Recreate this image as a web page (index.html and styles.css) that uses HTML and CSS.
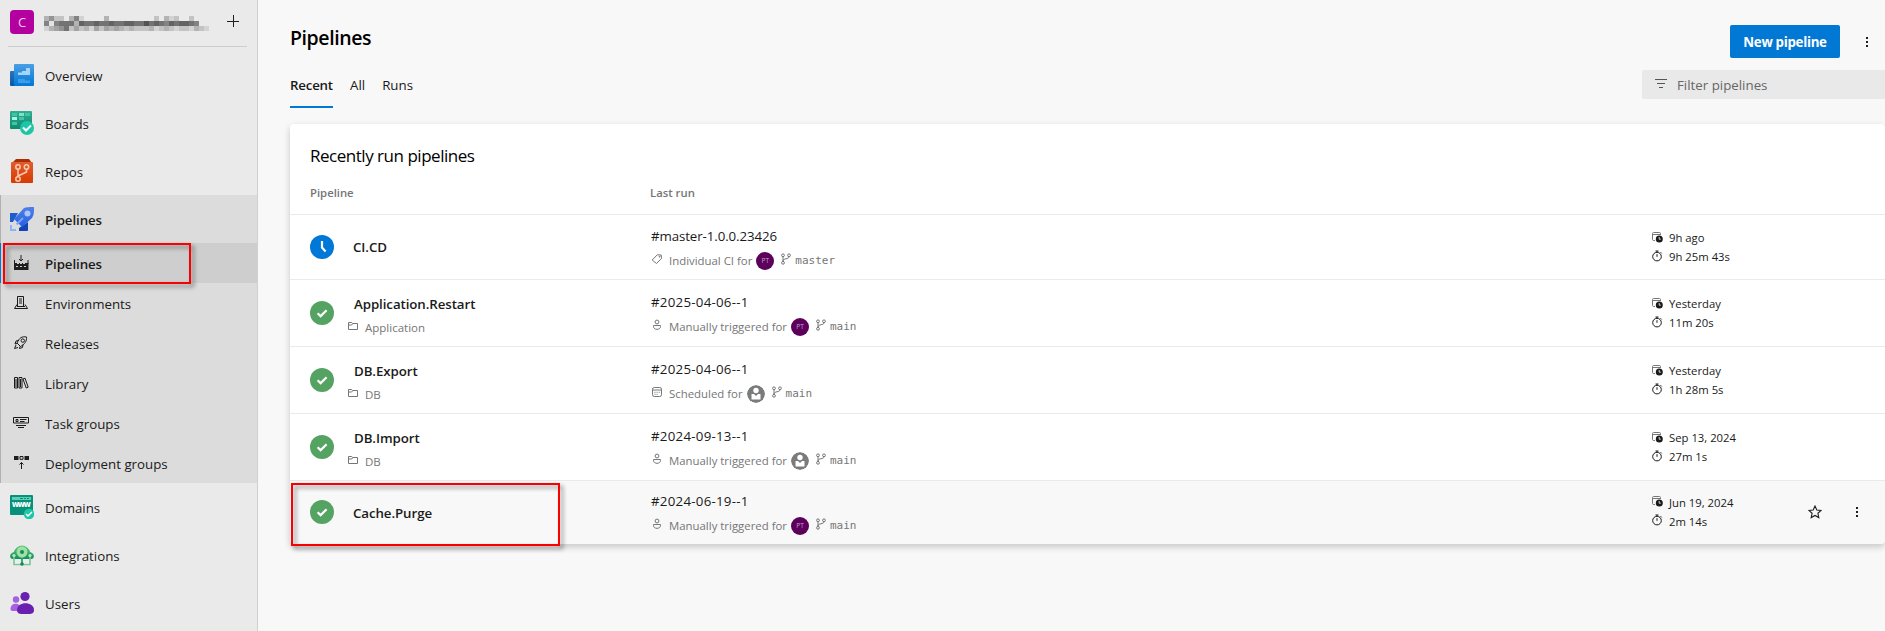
FILE: index.html
```html
<!DOCTYPE html>
<html lang="en">

<head>
    <meta charset="UTF-8">
    <meta name="viewport" content="width=device-width, initial-scale=1.0">
    <title>Pipelines</title>
    <link rel="stylesheet" href="styles.css">
</head>

<body>
    <!-- shared icons -->
    <svg class="defs" width="0" height="0">
        <defs>
            <linearGradient id="gBlue" x1="0" y1="0" x2="0" y2="1"><stop offset="0" stop-color="#4a9fe5"/><stop offset="1" stop-color="#0078d7"/></linearGradient>
            <linearGradient id="gNavy" x1="0" y1="0" x2="0" y2="1"><stop offset="0" stop-color="#2b74ba"/><stop offset="1" stop-color="#045aa5"/></linearGradient>
            <linearGradient id="gGreen" x1="0" y1="0" x2="0" y2="1"><stop offset="0" stop-color="#35ab91"/><stop offset="1" stop-color="#0f8a71"/></linearGradient>
            <linearGradient id="gOrange" x1="0" y1="0" x2="0" y2="1"><stop offset="0" stop-color="#df5d2f"/><stop offset="1" stop-color="#d83b01"/></linearGradient>
            <linearGradient id="gRocket" x1="0" y1="0" x2="0" y2="1"><stop offset="0" stop-color="#4f80e8"/><stop offset="1" stop-color="#2560e0"/></linearGradient>
            <linearGradient id="gCloud" x1="0" y1="0" x2="0" y2="1"><stop offset="0" stop-color="#5fca7b"/><stop offset="1" stop-color="#118f5e"/></linearGradient>
        </defs>
        <symbol id="ok" viewBox="0 0 24 24">
            <circle cx="12" cy="12" r="12" fill="#55a362"/>
            <path d="M7.6 12.2l3 2.9 6-5.8" fill="none" stroke="#fff" stroke-width="2.2"/>
        </symbol>
        <symbol id="queued" viewBox="0 0 24 24">
            <circle cx="12" cy="12" r="12" fill="#0078d7"/>
            <path d="M12 6v6.6l3.6 3.8" fill="none" stroke="#fff" stroke-width="2.2"/>
        </symbol>
        <symbol id="folder" viewBox="0 0 12 12">
            <path d="M1.5 9.5v-7h3.2l1 1h4.8v6zM1.5 5h3.2l1-1.4"/>
        </symbol>
        <symbol id="tag" viewBox="0 0 12 12">
            <path d="M1.2 7L6.3 1.8l3.9.2.3 3.4-5 5.1z"/><circle cx="8.6" cy="3.7" r=".5"/>
        </symbol>
        <symbol id="manual" viewBox="0 0 12 12">
            <circle cx="6" cy="3" r="1.9"/><path d="M2.5 6.5h7v1.2c0 3.5-7 3.5-7 0z"/>
        </symbol>
        <symbol id="schedule" viewBox="0 0 12 12">
            <rect x="1.5" y="1.5" width="9" height="9" rx="1.8"/><path d="M1.5 4h9M3.5 6.3h1M5.6 6.3h1M7.7 6.3h1M3.5 8.3h1M5.6 8.3h1"/>
        </symbol>
        <symbol id="branch" viewBox="0 0 12 12">
            <circle cx="3" cy="2.3" r="1.4"/><circle cx="9" cy="2.3" r="1.4"/><circle cx="3" cy="9.8" r="1.4"/>
            <path d="M3 3.7v4.7M9 3.7c0 2.8-6 1.2-6 4.4"/>
        </symbol>
        <symbol id="person" viewBox="0 0 18 18">
            <circle cx="9" cy="9" r="9" fill="#7b7b7b"/>
            <path d="M4.500 9H7l2 2 2-2h2.500v5.500h-9z" fill="#fff"/>
            <circle cx="9" cy="5.500" r="2.700" fill="#fff"/>
        </symbol>
        <symbol id="date" viewBox="0 0 12 12">
            <path d="M4 9.5H2.6c-.8 0-1.1-.5-1.1-1.1V2.6c0-.7.4-1.1 1.1-1.1h5.8c.7 0 1.1.4 1.1 1.1V4M1.5 3.5h8" stroke="#777"/>
            <circle cx="8.3" cy="8" r="3.5" fill="#1a1a1a" stroke="none"/><path d="M8.2 6v2.2h1.6" stroke="#fff" stroke-width=".8"/>
        </symbol>
        <symbol id="timer" viewBox="0 0 12 12">
            <circle cx="6" cy="6.6" r="4.3"/><path d="M4.5 1h3M6 1v1.3M6 4.2v2.6M9.5 2.2l1.2 1.2"/>
        </symbol>
    </svg>

    <nav class="sidebar">
        <div class="project">
            <span class="logo">C</span>
            <svg class="name" id="name" width="165" height="15" shape-rendering="crispEdges"></svg>
            <svg class="plus" width="12" height="12"><path d="M0 6.5h12M6.5 0v12" stroke="#1f1f1f" fill="none"/></svg>
        </div>

        <a class="item"><svg width="24" height="24" viewBox="0 0 24 24">
            <path d="M4 8H1a1 1 0 0 0-1 1v13a1 1 0 0 0 1 1h4z" fill="url(#gNavy)"/>
            <rect x="4" y="1" width="20" height="22" rx="1" fill="url(#gBlue)"/>
            <path d="M8 12V9.500h4V8h4V5h4v7z" fill="#a5d4fb"/><path d="M8 16h7v1.500h5V20H8z" fill="#3f9be8"/>
        </svg>Overview</a>
        <a class="item"><svg width="24" height="24" viewBox="0 0 24 24">
            <rect width="22" height="18" rx="1" fill="url(#gGreen)"/>
            <path d="M2 2h5v3H2zM15 2h5v3h-5zM9 6h5v3H9zM2 11h5v3H2z" fill="#3cc7a5"/>
            <path d="M9 2h5v3H9z" fill="#7be3c8"/><path d="M2 6h5v3H2z" fill="#a8f7e2"/>
            <circle cx="17" cy="17" r="7" fill="#1cc7a7"/><path d="M13 16.500l3 3 5-5" fill="none" stroke="#fff" stroke-width="2"/>
        </svg>Boards</a>
        <a class="item"><svg width="24" height="24" viewBox="0 0 24 24">
            <path d="M6 0h13l3 4H2z" fill="#ab2f02"/><rect x="1" y="3" width="22" height="21" rx="1" fill="url(#gOrange)"/>
            <g fill="none" stroke="#ffc9ae" stroke-width="1.500"><circle cx="8" cy="8" r="2.200"/><circle cx="16.500" cy="8" r="2.200"/><circle cx="8" cy="20" r="2.200"/><path d="M8 10v8M16.500 10v3L8 17"/></g>
        </svg>Repos</a>

        <div class="group">
            <a class="item bold"><svg width="24" height="24" viewBox="0 0 24 24">
                <path d="M0 7V6h8L3 15H0z" fill="#1c5ccb"/><path d="M9 21l9-6v8a1 1 0 0 1-1 1H9z" fill="#1345b8"/>
                <path d="M14 1c2-1 5-1 9-1 1 0 1 0 1 1 0 4 0 7-2 10L12 20l-8-8z" fill="url(#gRocket)"/>
                <circle cx="17.500" cy="6.500" r="3" fill="#a8c5f8"/>
                <path d="M13 11l-6.500 6.500" stroke="#7ba3f2" stroke-width="2"/>
                <path d="M0 18h2v4h4v2H0z" fill="#8fb1f6"/><path d="M2 18l3-2 3 3-2 3H2z" fill="#dcdcdc"/>
            </svg>Pipelines</a>
            <a class="item sub bold current"><svg width="16" height="16" viewBox="0 0 16 16">
                <path d="M8 0v6M6 4l2 2 2-2M1.500 5v4M15 5v4" fill="none" stroke="#1f1f1f"/>
                <path d="M1 8h3v1h2V8h1v1h2V8h1v1h2V8h3.500v7H1z" fill="#1f1f1f"/><path d="M3 11.500h2M7 11.500h2M11 11.500h2" stroke="#cecece"/>
            </svg>Pipelines</a>
            <a class="item sub"><svg class="line" width="16" height="16" viewBox="0 0 16 16">
                <path d="M4.500 12V1.500h6V12M6 4h3M6 6h3M6 8h3M4 9.500l-2.500 4h13l-2.500-4M4 11.500h8"/>
            </svg>Environments</a>
            <a class="item sub"><svg class="line" width="16" height="16" viewBox="0 0 16 16">
                <path d="M4 8c2-5 5-7 9.500-6 .500 4-2 7.500-6 9.500zM6 5.500l-3 .500-1 3 2-.500M10 9.500l-.500 3-3 1 .500-2M3 10l-1.500 3.500L5 12.500"/><circle cx="9.800" cy="5.600" r="1.700"/>
            </svg>Releases</a>
            <a class="item sub"><svg class="line" width="16" height="16" viewBox="0 0 16 16">
                <path d="M1.500 2.500h3v10.500h-3zM6 2.500h3v10.500H6zM3 4v8M7.500 4v8M10 4l2-.800 3.200 9-2 .800z"/>
            </svg>Library</a>
            <a class="item sub"><svg class="line" width="16" height="16" viewBox="0 0 16 16">
                <path d="M.5 2.500h15v5.500H.5zM3 4.500h2v2H3zM7 4.500h6.500M7 6.500h4.500M3 10.500h10M5 12.500h6"/>
            </svg>Task groups</a>
            <a class="item sub"><svg class="line" width="16" height="16" viewBox="0 0 16 16">
                <path d="M1 1h4.500v4H1zM11.500 1H16v4h-4.500z" fill="#1f1f1f" stroke="none"/><path d="M7 1.500h3v2.800H7zM8.500 14V7.500M6.500 9.500l2-2 2 2"/>
            </svg>Deployment groups</a>
        </div>

        <a class="item"><svg width="24" height="24" viewBox="0 0 24 24">
            <rect width="23" height="20" rx="1" fill="#06917a"/><rect x="2" y="2" width="19" height="3" fill="#5fcdb5"/><path d="M10 3.500h3M14 3.500h2M17 3.500h2" stroke="#06917a"/>
            <text class="www" x="1.800" y="12.300" textLength="19">www</text>
            <circle cx="19" cy="19" r="5.300" fill="#1cc7a7"/><path d="M16 19l2 2 4-4" fill="none" stroke="#fff" stroke-width="1.500"/>
        </svg>Domains</a>
        <a class="item"><svg width="24" height="24" viewBox="0 0 24 24">
            <path d="M4 9a8.200 8.200 0 0 1 16 0c5 1 5 7 1 7H3C-1 16-1 10 4 9z" fill="url(#gCloud)"/>
            <circle cx="12" cy="9" r="5.500" fill="#9fe0a4"/><circle cx="12" cy="9" r="2" fill="#158a5c"/>
            <path d="M4 14v7.500h16V14M12 14v7" fill="none" stroke="#7fc49c" stroke-width="1.600"/><path d="M5 16.500h14v4H5z" fill="#e6f1ea"/><path d="M12 15v6" stroke="#158a5c" stroke-width="1.500"/>
            <circle cx="4" cy="12.500" r="1.600" fill="#b7ebbc"/><circle cx="20" cy="12.500" r="1.600" fill="#b7ebbc"/><circle cx="12" cy="21" r="1.800" fill="#0f8a5f"/>
        </svg>Integrations</a>
        <a class="item"><svg width="24" height="24" viewBox="0 0 24 24">
            <circle cx="6" cy="8.500" r="3.200" fill="#a561df"/><path d="M.5 18c0-7 10-7 11 0v2h-8c-2 0-3-.500-3-2z" fill="#a561df"/>
            <circle cx="15" cy="5.500" r="4.600" fill="#6b1fb1"/><path d="M7 19c0-9 17-9 17 0 0 3-2 4-5 4h-7c-3 0-5-1-5-4z" fill="#6b1fb1"/>
        </svg>Users</a>
        <div class="mark mark-nav"></div>
    </nav>

    <main>
        <header>
            <h1>Pipelines</h1>
            <button>New pipeline</button>
            <svg class="dots" width="4" height="12"><path d="M1 1h2v2H1zM1 5h2v2H1zM1 9h2v2H1z"/></svg>
        </header>
        <div class="toolbar">
            <div class="tabs">
                <a class="tab active">Recent</a>
                <a class="tab">All</a>
                <a class="tab">Runs</a>
            </div>
            <div class="filter">
                <svg width="12" height="10"><path d="M0 .5h12M2 4.500h8M4 8.500h4" stroke="#555" fill="none"/></svg>
                Filter pipelines
            </div>
        </div>
        <section class="card">
            <h2>Recently run pipelines</h2>
            <div class="columns">
                <span>Pipeline</span>
                <span>Last run</span>
            </div>
            <div id="rows"></div>
            <div class="mark mark-row"></div>
        </section>
    </main>

    <script>
        const pipelines = [
            { name: "CI.CD", status: "queued", run: "#master-1.0.0.23426", icon: "tag", reason: "Individual CI for", by: "PT", branch: "master", date: "9h ago", time: "9h 25m 43s" },
            { name: "Application.Restart", folder: "Application", status: "ok", run: "#2025-04-06--1", icon: "manual", reason: "Manually triggered for", by: "PT", branch: "main", date: "Yesterday", time: "11m 20s" },
            { name: "DB.Export", folder: "DB", status: "ok", run: "#2025-04-06--1", icon: "schedule", reason: "Scheduled for", branch: "main", date: "Yesterday", time: "1h 28m 5s" },
            { name: "DB.Import", folder: "DB", status: "ok", run: "#2024-09-13--1", icon: "manual", reason: "Manually triggered for", branch: "main", date: "Sep 13, 2024", time: "27m 1s" },
            { name: "Cache.Purge", status: "ok", run: "#2024-06-19--1", icon: "manual", reason: "Manually triggered for", by: "PT", branch: "main", date: "Jun 19, 2024", time: "2m 14s", hover: true }
        ];

        function icon(id, size, cls) {
            return `<svg class="${cls || "line"}" width="${size}" height="${size}"><use href="#${id}"/></svg>`;
        }

        document.getElementById("rows").innerHTML = pipelines.map(p => `
            <div class="row ${p.folder ? "tall" : ""} ${p.hover ? "hover" : ""}">
                ${icon(p.status, 24, "status")}
                <div class="title">
                    <div class="pname">${p.name}</div>
                    ${p.folder ? `<div class="folder">${icon("folder", 12)}<span>${p.folder}</span></div>` : ""}
                </div>
                <div class="run">
                    <div class="number ${p.run.startsWith("#20") ? "dated" : ""}">${p.run}</div>
                    <div class="reason">
                        ${icon(p.icon, 12)}<span>${p.reason}</span>
                        ${p.by ? `<b class="avatar">${p.by}</b>` : icon("person", 18, "avatar")}
                        ${icon("branch", 12)}<code>${p.branch}</code>
                    </div>
                </div>
                <div class="when">
                    <div>${icon("date", 12)}${p.date}</div>
                    <div>${icon("timer", 12)}${p.time}</div>
                </div>
                ${p.hover ? `<div class="actions">
                    <svg width="14" height="14" viewBox="0 0 14 14"><path d="M7 1l1.800 4 4.300.400-3.200 2.900.9 4.300L7 10.400l-3.800 2.200.9-4.300L.9 5.400 5.200 5z" fill="none" stroke="#1f1f1f" stroke-width="1.100"/></svg>
                    <svg class="dots" width="4" height="12"><path d="M1 1h2v2H1zM1 5h2v2H1zM1 9h2v2H1z"/></svg>
                </div>` : ""}
            </div>`).join("");

        // masked project name, one grey level (hex digit) per 5px block
        const mask = [
            "b9cc.b8d....b.........c.bdc..c...",
            "8e8777b677677677667757678676678..",
            "dba97cacbdacababcbcccbdcbcdccdbcd"
        ];
        document.getElementById("name").innerHTML = mask.map((line, y) =>
            [...line].map((c, x) => c === "." ? "" :
                `<rect x="${x * 5}" y="${y * 5}" width="5" height="5" fill="#${c}3${c}3${c}3"/>`).join("")
        ).join("");
    </script>
</body>

</html>
```
FILE: styles.css
```css
* {
    box-sizing: border-box;
}

body {
    display: flex;
    height: 631px;
    margin: 0;
    overflow: hidden;
    background-color: #f8f8f8;
    color: #1a1a1a;
    font-family: "Open Sans", "Noto Sans", sans-serif;
    font-size: 13.3px;
    white-space: nowrap;
}

svg {
    display: block;
    flex: none;
}

.defs {
    position: absolute;
}

.line {
    fill: none;
    stroke: currentColor;
    stroke-width: 1;
}

/* sidebar */
.sidebar {
    position: relative;
    flex: none;
    width: 258px;
    background-color: #eaeaea;
    border-right: 1px solid #d0d0d0;
}

.project {
    display: flex;
    align-items: flex-start;
    height: 47px;
    margin: 0 10px 4px 8px;
    padding: 10px 0 0 2px;
    border-bottom: 1px solid #cdcdcd;
}

.logo {
    width: 24px;
    height: 24px;
    border-radius: 4px;
    background-color: #b4009e;
    color: #f3cdee;
    font-size: 13px;
    line-height: 24px;
    text-align: center;
}

.name {
    margin: 6px 0 0 10px;
}

.plus {
    margin: 5px 0 0 18px;
}

.item {
    display: flex;
    align-items: center;
    gap: 11px;
    height: 48px;
    padding: 2px 0 0 10px;
}

.item svg {
    margin-top: -2px;
}

.group {
    background-color: #dcdcdc;
    box-shadow: inset 1px 0 #b0b0b0;
}

.sub {
    height: 40px;
    gap: 16px;
    padding-left: 13px;
}

.bold {
    font-weight: 600;
    letter-spacing: -0.1px;
}

.current {
    background-color: #cecece;
    box-shadow: inset 1px 0 #0078d4;
}

.www {
    fill: white;
    font: 700 8px "DejaVu Sans", sans-serif;
}

/* main area */
main {
    flex: 1;
    padding-left: 32px;
}

header {
    display: flex;
    align-items: center;
    height: 70px;
    padding: 13px 16px 0 0;
}

h1 {
    flex: 1;
    margin: 0;
    padding-bottom: 8px;
    color: #000;
    font-size: 19.5px;
    font-weight: 600;
    letter-spacing: -0.4px;
}

button {
    width: 110px;
    height: 33px;
    margin: 0 25px 0 0;
    padding: 0;
    border: none;
    border-radius: 2px;
    background-color: #0078d4;
    color: white;
    font: 700 13.3px "Open Sans", sans-serif;
    letter-spacing: -0.3px;
}

.dots {
    fill: #1f1f1f;
}

.toolbar {
    display: flex;
    justify-content: space-between;
    height: 54px;
}

.tabs {
    display: flex;
    gap: 17px;
    height: 38px;
    line-height: 30px;
}

.active {
    width: 43px;
    border-bottom: 2px solid #0078d4;
    font-weight: 600;
    letter-spacing: -0.2px;
}

.filter {
    display: flex;
    align-items: center;
    gap: 10px;
    width: 243px;
    height: 29px;
    padding: 0 0 0 13px;
    border-radius: 2px 0 0 2px;
    background-color: #e9e9e9;
    color: #666;
}

.filter svg {
    margin-top: -2px;
}

/* pipelines card */
.card {
    position: relative;
    height: 420px;
    border-radius: 4px;
    background-color: white;
    box-shadow: 0 3px 7px rgba(0, 0, 0, 0.2);
}

h2 {
    height: 53px;
    margin: 0;
    padding: 19px 0 0 20px;
    color: #000;
    font-size: 17px;
    font-weight: 400;
    line-height: 26px;
    letter-spacing: -0.48px;
}

.columns {
    display: grid;
    grid-template-columns: 340px 1fr;
    height: 37px;
    padding: 8px 0 0 20px;
    color: #767676;
    font-size: 11.3px;
    font-weight: 600;
}

.row {
    display: flex;
    align-items: center;
    height: 65px;
    padding-left: 20px;
    border-top: 1px solid #eaeaea;
}

.tall {
    height: 67px;
}

.hover {
    height: 64px;
    padding-bottom: 2px;
    border-radius: 0 0 4px 4px;
    background-color: #f8f8f8;
}

.title {
    width: 317px;
    padding-left: 19px;
}

.tall .title {
    margin-top: 5px;
}

.pname {
    font-weight: 600;
    line-height: 20px;
    letter-spacing: -0.08px;
}

.tall .pname {
    margin: 0 0 4px 1px;
}

.hover .pname {
    margin-top: 2px;
}

.folder {
    display: flex;
    align-items: center;
    gap: 6px;
    margin-left: -6px;
    color: #767676;
    font-size: 11.5px;
    line-height: 20px;
}

.folder svg {
    margin-top: -4px;
}

.run {
    width: 1000px;
    margin-top: 2px;
}

.hover .run {
    margin-top: 3px;
}

.number {
    line-height: 22px;
    margin-bottom: 3px;
    letter-spacing: -0.1px;
}

.dated {
    letter-spacing: 0.25px;
}

.reason {
    display: flex;
    align-items: center;
    height: 22px;
    color: #767676;
    font-size: 11.4px;
}

.reason .line {
    margin: -4px 6px 0 0;
}

.avatar {
    width: 18px;
    height: 18px;
    margin: 0 6px 0 4px;
    border-radius: 50%;
    background-color: #5c005c;
    color: #c9a3c9;
    font-size: 6.5px;
    font-weight: 400;
    line-height: 18px;
    text-align: center;
}

svg.avatar {
    background: none;
}

code {
    margin-left: -3px;
    font-family: "DejaVu Sans Mono", monospace;
    font-size: 11px;
}

.when {
    width: 157px;
    font-size: 11.3px;
}

.when div {
    display: flex;
    align-items: center;
    gap: 6px;
    height: 19px;
}

.when svg {
    margin-top: -2px;
}

.actions {
    display: flex;
    align-items: center;
    gap: 33px;
}

/* red callouts */
.mark {
    position: absolute;
    border: 2px solid #fa0000;
    filter: drop-shadow(3px 3px 2px rgba(0, 0, 0, 0.45));
}

.mark-nav {
    top: 243px;
    left: 3px;
    width: 188px;
    height: 41px;
}

.mark-row {
    top: 359px;
    left: 1px;
    width: 269px;
    height: 63px;
}
```
